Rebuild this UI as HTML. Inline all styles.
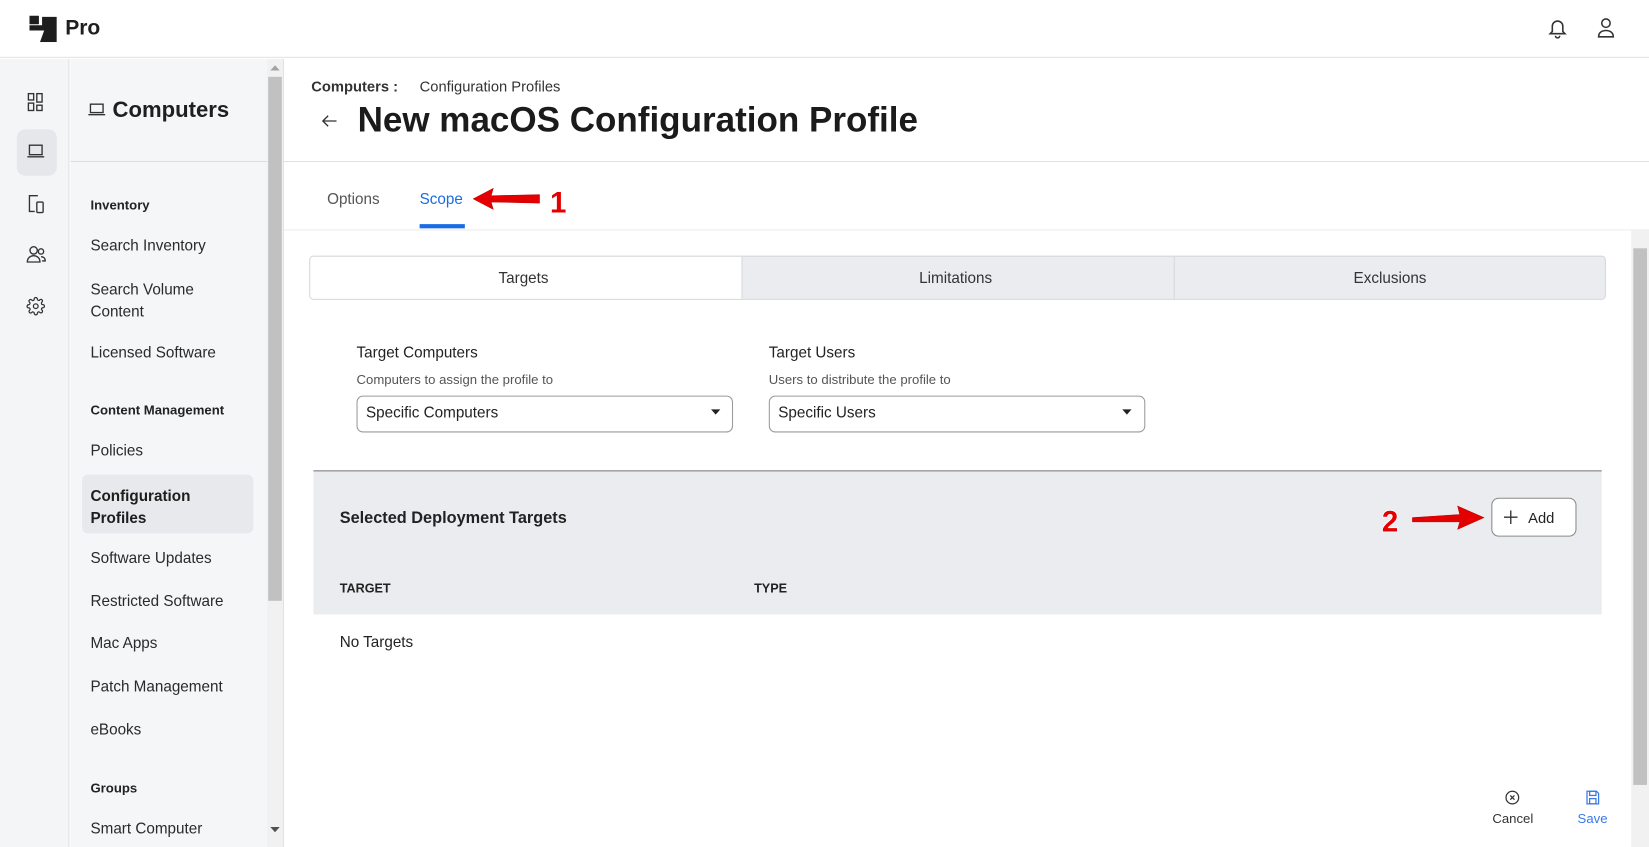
<!DOCTYPE html>
<html><head><meta charset="utf-8"><style>
*{box-sizing:border-box;margin:0;padding:0}
html,body{width:1649px;height:847px;overflow:hidden;background:#fff}
#w{position:absolute;left:0;top:0;width:1568px;height:805px;transform:scale(1.0517,1.0522);transform-origin:0 0;font-family:"Liberation Sans",Arial,sans-serif;color:#1f1f1f}
.a{position:absolute}
.t{position:absolute;white-space:nowrap;line-height:1}
svg{position:absolute}
.nav{font-size:14.5px;color:#2a2a2a}
.sec{font-size:12.5px;font-weight:bold;color:#222}
</style></head><body><div id="w">
<div class="a" style="left:0;top:0;width:1568px;height:55px;border-bottom:1px solid #e3e3e3"></div>
<svg style="left:28px;top:14px" width="26" height="26" viewBox="0 0 26 26"><path d="M0 1H9V9H0Z" fill="#1e1e1e"/><path d="M12 2H26V26H10L14 15H0V10H12Z" fill="#1e1e1e"/></svg>
<div class="t" style="left:62px;top:17px;font-size:20px;font-weight:bold">Pro</div>
<svg style="left:1472px;top:17px" width="18" height="20" viewBox="0 0 18 20" fill="none" stroke="#333" stroke-width="1.5"><path d="M4 8a5 5 0 0 1 10 0v5l2 2H2l2-2Z"/><path d="M7 17a2 2 0 0 0 4 0"/></svg>
<svg style="left:1518px;top:16px" width="18" height="21" viewBox="0 0 18 21" fill="none" stroke="#333" stroke-width="1.5"><circle cx="9" cy="6" r="4"/><path d="M2 19c0-4 3-6 7-6s7 2 7 6Z"/></svg>
<div class="a" style="left:0;top:56px;width:66px;height:749px;background:#f4f5f6;border-right:1px solid #e2e2e2"></div>
<div class="a" style="left:16px;top:123px;width:38px;height:44px;background:#e6e7ea;border-radius:8px"></div>
<svg style="left:26px;top:88px" width="16" height="18" viewBox="0 0 16 18" fill="none" stroke="#333" stroke-width="1.3"><rect x="1" y="1" width="5" height="6"/><rect x="1" y="10" width="5" height="7"/><rect x="9" y="1" width="5" height="8"/><rect x="9" y="12" width="5" height="5"/></svg>
<svg style="left:25px;top:137px" width="18" height="14" viewBox="0 0 18 14" fill="none" stroke="#333" stroke-width="1.3"><rect x="3" y="1" width="12" height="9"/><path d="M1 12h16"/></svg>
<svg style="left:26px;top:185px" width="17" height="18" viewBox="0 0 17 18" fill="none" stroke="#333" stroke-width="1.3"><path d="M10 1H2v15h5"/><rect x="9" y="7" width="6" height="10" rx="1"/></svg>
<svg style="left:25px;top:233px" width="19" height="17" viewBox="0 0 19 17" fill="none" stroke="#333" stroke-width="1.3"><circle cx="7" cy="5" r="3.5"/><path d="M1 16c0-4 3-6 6-6s6 2 6 6Z"/><circle cx="14" cy="6" r="2.5"/><path d="M14 11c2 0 4 1 4 4h-3"/></svg>
<svg style="left:25px;top:282px" width="18" height="18" viewBox="0 0 24 24" fill="none" stroke="#333" stroke-width="1.6"><circle cx="12" cy="12" r="3"/><path d="M19.4 15a1.7 1.7 0 0 0 .3 1.8l.1.1a2 2 0 1 1-2.8 2.8l-.1-.1a1.7 1.7 0 0 0-1.8-.3 1.7 1.7 0 0 0-1 1.5V21a2 2 0 1 1-4 0v-.1a1.7 1.7 0 0 0-1.1-1.5 1.7 1.7 0 0 0-1.8.3l-.1.1a2 2 0 1 1-2.8-2.8l.1-.1a1.7 1.7 0 0 0 .3-1.800 1.7 1.7 0 0 0-1.5-1H3a2 2 0 1 1 0-4h.1a1.7 1.7 0 0 0 1.5-1.1 1.7 1.7 0 0 0-.3-1.8l-.1-.1a2 2 0 1 1 2.8-2.8l.1.1a1.7 1.7 0 0 0 1.8.3H9a1.7 1.7 0 0 0 1-1.5V3a2 2 0 1 1 4 0v.1a1.7 1.7 0 0 0 1 1.5 1.7 1.7 0 0 0 1.8-.3l.1-.1a2 2 0 1 1 2.8 2.8l-.1.1a1.7 1.7 0 0 0-.3 1.8V9a1.7 1.7 0 0 0 1.5 1H21a2 2 0 1 1 0 4h-.1a1.7 1.7 0 0 0-1.5 1Z"/></svg>
<div class="a" style="left:67px;top:56px;width:203px;height:749px;background:#f5f6f7;border-right:1px solid #e2e2e2"></div>
<div class="a" style="left:254px;top:56px;width:15px;height:749px;background:#f1f1f1"></div>
<div class="a" style="left:255px;top:73px;width:13px;height:498px;background:#c1c1c1"></div>
<svg style="left:257px;top:62px" width="9" height="6"><path d="M0 5L4.5 0L9 5Z" fill="#a3a3a3"/></svg>
<svg style="left:257px;top:786px" width="9" height="6"><path d="M0 0L4.5 5L9 0Z" fill="#505050"/></svg>
<svg style="left:83px;top:98px" width="18" height="13" viewBox="0 0 18 13" fill="none" stroke="#333" stroke-width="1.3"><rect x="3" y="1" width="12" height="8"/><path d="M1 11h16"/></svg>
<div class="t" style="left:107px;top:94px;font-size:21px;font-weight:bold">Computers</div>
<div class="a" style="left:67px;top:153px;width:187px;height:1px;background:#dedede"></div>
<div class="t sec" style="left:86px;top:189px">Inventory</div>
<div class="t nav" style="left:86px;top:227px">Search Inventory</div>
<div class="t nav" style="left:86px;top:266px;line-height:21px;white-space:normal;width:140px">Search Volume Content</div>
<div class="t nav" style="left:86px;top:329px">Licensed Software</div>
<div class="t sec" style="left:86px;top:384px">Content Management</div>
<div class="t nav" style="left:86px;top:422px">Policies</div>
<div class="a" style="left:78px;top:451px;width:163px;height:56px;background:#e8e9ec;border-radius:6px"></div>
<div class="t nav" style="left:86px;top:462px;line-height:21px;font-weight:bold;color:#1d1d1d">Configuration<br>Profiles</div>
<div class="t nav" style="left:86px;top:524px">Software Updates</div>
<div class="t nav" style="left:86px;top:565px">Restricted Software</div>
<div class="t nav" style="left:86px;top:605px">Mac Apps</div>
<div class="t nav" style="left:86px;top:646px">Patch Management</div>
<div class="t nav" style="left:86px;top:687px">eBooks</div>
<div class="t sec" style="left:86px;top:743px">Groups</div>
<div class="t nav" style="left:86px;top:781px">Smart Computer</div>
<div class="t" style="left:296px;top:75px;font-size:14px;font-weight:bold;color:#333">Computers :</div>
<div class="t" style="left:399px;top:75px;font-size:14px;color:#333">Configuration Profiles</div>
<svg style="left:306px;top:109px" width="15" height="12" viewBox="0 0 15 12" fill="none" stroke="#333" stroke-width="1.3"><path d="M14 6H1M6 1L1 6l5 5"/></svg>
<div class="t" style="left:340px;top:98px;font-size:33.3px;font-weight:bold;color:#1b1b1b">New macOS Configuration Profile</div>
<div class="a" style="left:270px;top:153px;width:1298px;height:1px;background:#e0e0e0"></div>
<div class="t" style="left:311px;top:183px;font-size:14.5px;color:#555">Options</div>
<div class="t" style="left:399px;top:183px;font-size:14.5px;color:#1a6ce6">Scope</div>
<div class="a" style="left:399px;top:213px;width:43px;height:4px;background:#1a6ce6"></div>
<div class="a" style="left:270px;top:218px;width:1298px;height:1px;background:#ececec"></div>
<div class="a" style="left:1551px;top:219px;width:17px;height:586px;background:#f1f1f1"></div>
<div class="a" style="left:1553px;top:236px;width:13px;height:510px;background:#c1c1c1"></div>
<div class="a" style="left:294px;top:243px;width:1233px;height:42px;border:1px solid #d6d7da;border-radius:4px;background:#ebecef;overflow:hidden">
<div class="a" style="left:0;top:0;width:411px;height:40px;background:#fff;border-right:1px solid #d6d7da"></div>
<div class="a" style="left:821px;top:0;width:1px;height:40px;background:#d6d7da"></div>
</div>
<div class="t" style="left:474px;top:258px;font-size:14.5px;color:#333">Targets</div>
<div class="t" style="left:874px;top:258px;font-size:14.5px;color:#333">Limitations</div>
<div class="t" style="left:1287px;top:258px;font-size:14.5px;color:#333">Exclusions</div>
<div class="t" style="left:339px;top:329px;font-size:14.5px;color:#222">Target Computers</div>
<div class="t" style="left:339px;top:355px;font-size:12.5px;color:#555">Computers to assign the profile to</div>
<div class="a" style="left:339px;top:376px;width:358px;height:35px;border:1px solid #9a9a9a;border-radius:6px;background:#fff"></div>
<div class="t" style="left:348px;top:386px;font-size:14.5px;color:#222">Specific Computers</div>
<svg style="left:676px;top:389px" width="9" height="5"><path d="M0 0H9L4.5 5Z" fill="#222"/></svg>
<div class="t" style="left:731px;top:329px;font-size:14.5px;color:#222">Target Users</div>
<div class="t" style="left:731px;top:355px;font-size:12.5px;color:#555">Users to distribute the profile to</div>
<div class="a" style="left:731px;top:376px;width:358px;height:35px;border:1px solid #9a9a9a;border-radius:6px;background:#fff"></div>
<div class="t" style="left:740px;top:386px;font-size:14.5px;color:#222">Specific Users</div>
<svg style="left:1067px;top:389px" width="9" height="5"><path d="M0 0H9L4.5 5Z" fill="#222"/></svg>
<div class="a" style="left:298px;top:447px;width:1225px;height:137px;background:#ebecf0;border-top:1px solid #7b7b7b"></div>
<div class="t" style="left:323px;top:485px;font-size:15.5px;font-weight:bold;color:#222">Selected Deployment Targets</div>
<div class="a" style="left:1418px;top:473px;width:81px;height:37px;border:1px solid #8a8a8a;border-radius:7px;background:#fff"></div>
<svg style="left:1430px;top:485px" width="13" height="13" viewBox="0 0 13 13" stroke="#333" stroke-width="1.3"><path d="M6.5 0v13M0 6.5h13"/></svg>
<div class="t" style="left:1453px;top:485px;font-size:14px;color:#222">Add</div>
<div class="t" style="left:323px;top:553px;font-size:12px;font-weight:bold;color:#222">TARGET</div>
<div class="t" style="left:717px;top:553px;font-size:12px;font-weight:bold;color:#222">TYPE</div>
<div class="t" style="left:323px;top:604px;font-size:14.5px;color:#222">No Targets</div>
<svg style="left:1431px;top:751px" width="14" height="14" viewBox="0 0 14 14" fill="none" stroke="#333" stroke-width="1.2"><circle cx="7" cy="7" r="6"/><path d="M5 5l4 4M9 5l-4 4"/></svg>
<div class="t" style="left:1419px;top:772px;font-size:12.5px;color:#333">Cancel</div>
<svg style="left:1508px;top:751px" width="13" height="14" viewBox="0 0 13 14" fill="none" stroke="#3a78e8" stroke-width="1.2"><path d="M1 1h9l2 2v10H1Z"/><rect x="3.5" y="1" width="6" height="4"/><rect x="3.5" y="8" width="6" height="5"/></svg>
<div class="t" style="left:1500px;top:772px;font-size:12.5px;color:#3a78e8">Save</div>
<svg style="left:445px;top:172px" width="110" height="36" viewBox="0 0 110 36"><path d="M5 17L24 7L22 14L68 13L68 21L22 20L24 27Z" fill="#e40000" stroke="#b00" stroke-width=".5"/><text x="78" y="30" font-family="Liberation Sans,Arial,sans-serif" font-weight="bold" font-size="28" fill="#e40000" stroke="#fff" stroke-width="1.5" paint-order="stroke">1</text></svg>
<svg style="left:1310px;top:475px" width="105" height="36" viewBox="0 0 105 36"><text x="4" y="30" font-family="Liberation Sans,Arial,sans-serif" font-weight="bold" font-size="28" fill="#e40000" stroke="#fff" stroke-width="1.5" paint-order="stroke">2</text><path d="M33 17L78 14L76 6L101 17L76 28L78 21L33 21Z" fill="#e40000" stroke="#b00" stroke-width=".5"/></svg>
</div></body></html>
